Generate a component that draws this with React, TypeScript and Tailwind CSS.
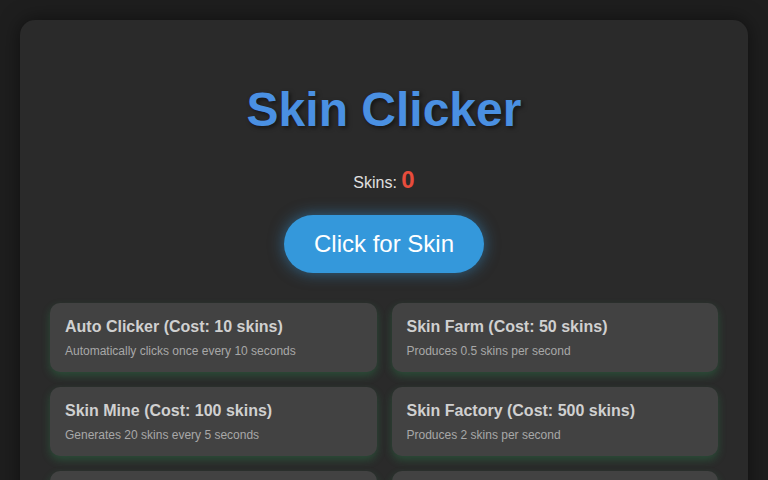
import React, { useState } from 'react';

type Upgrade = {
  id: string;
  name: string;
  cost: number;
  description: string;
};

const upgrades: Upgrade[] = [
  { id: 'auto', name: 'Auto Clicker', cost: 10, description: 'Automatically clicks once every 10 seconds' },
  { id: 'farm', name: 'Skin Farm', cost: 50, description: 'Produces 0.5 skins per second' },
  { id: 'mine', name: 'Skin Mine', cost: 100, description: 'Generates 20 skins every 5 seconds' },
  { id: 'factory', name: 'Skin Factory', cost: 500, description: 'Produces 2 skins per second' },
  { id: 'bank', name: 'Skin Bank', cost: 1000, description: 'Produces 5 skins per second' },
  { id: 'portal', name: 'Skin Portal', cost: 5000, description: 'Produces 20 skins per second' },
];

const App: React.FC = () => {
  const [skins, setSkins] = useState(0);

  const buy = (upgrade: Upgrade) => {
    if (skins >= upgrade.cost) setSkins(skins - upgrade.cost);
  };

  return (
    <div className="min-h-screen bg-[#1e1e1e] p-5 font-['Liberation_Sans',Arial,sans-serif]">
      <div className="bg-[#2a2a2a] rounded-[15px] p-[30px] shadow-[0_0_20px_rgba(0,0,0,0.5)] text-center">
        <h1 className="mt-[32px] mb-[25px] text-[48px] leading-[1.15] font-bold text-[#4a90e2] [text-shadow:2px_2px_4px_rgba(0,0,0,0.5)]">
          Skin Clicker
        </h1>
        <p className="mb-[17px] text-[16px] text-[#e0e0e0]">
          Skins: <span className="text-[24px] font-bold text-[#e74c3c]">{skins}</span>
        </p>
        <button
          onClick={() => setSkins(skins + 1)}
          className="bg-[#3498db] text-white text-[24px] leading-[1.15] px-[30px] py-[15px] rounded-full shadow-[0_0_15px_rgba(52,152,219,0.55)] cursor-pointer"
        >
          Click for Skin
        </button>

        {/* upgrade shop */}
        <div className="mt-[30px] grid grid-cols-2 gap-[15px] text-left">
          {upgrades.map(upgrade => (
            <div
              key={upgrade.id}
              onClick={() => buy(upgrade)}
              className="bg-[#424242] rounded-[10px] pt-[15px] px-[15px] pb-[13px] shadow-[0_4px_8px_rgba(46,160,90,0.3)] cursor-pointer"
            >
              <h3 className="mb-[9px] text-[16px] leading-[1.15] font-bold text-[#d0d0d0]">
                {upgrade.name} (Cost: {upgrade.cost} skins)
              </h3>
              <p className="text-[12px] leading-[1.15] text-[#a8a8a8]">{upgrade.description}</p>
            </div>
          ))}
        </div>
      </div>
    </div>
  );
};

export default App;
